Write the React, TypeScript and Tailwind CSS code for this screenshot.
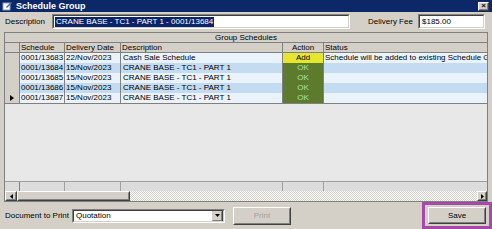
import React from "react"

const ROWS = [
  { id: "0001/13683", date: "22/Nov/2023", desc: "Cash Sale Schedule", action: "Add", status: "Schedule will be added to existing Schedule Group", current: false },
  { id: "0001/13684", date: "15/Nov/2023", desc: "CRANE BASE - TC1 - PART 1", action: "OK", status: "", current: false },
  { id: "0001/13685", date: "15/Nov/2023", desc: "CRANE BASE - TC1 - PART 1", action: "OK", status: "", current: false },
  { id: "0001/13686", date: "15/Nov/2023", desc: "CRANE BASE - TC1 - PART 1", action: "OK", status: "", current: false },
  { id: "0001/13687", date: "15/Nov/2023", desc: "CRANE BASE - TC1 - PART 1", action: "OK", status: "", current: true },
]

const COLS = "grid grid-cols-[15px_45px_56px_162px_41px_1fr]"

function Sunken({ className, children }: { className?: string; children?: React.ReactNode }) {
  return (
    <div className={`border border-t-[#808080] border-l-[#808080] border-b-white border-r-white ${className ?? ""}`}>
      <div className="h-full w-full border border-t-[#404040] border-l-[#404040] border-b-[#d4d0c8] border-r-[#d4d0c8] bg-white flex items-center overflow-hidden">
        {children}
      </div>
    </div>
  )
}

function Raised({ className, children }: { className?: string; children?: React.ReactNode }) {
  return (
    <div className={`border border-t-white border-l-white border-b-[#404040] border-r-[#404040] bg-[#d4d0c8] ${className ?? ""}`}>
      <div className="h-full w-full border border-t-[#d4d0c8] border-l-[#d4d0c8] border-b-[#808080] border-r-[#808080] flex items-center justify-center">
        {children}
      </div>
    </div>
  )
}

export default function App() {
  return (
    <div className="w-[492px] h-[229px] overflow-hidden bg-[#d4d0c8] flex flex-col font-['Liberation_Sans',Arial,sans-serif] text-[8px] leading-[10px] text-black">
      {/* title bar */}
      <div className="h-[12px] bg-[#0c2868] flex items-center pl-[2px] pr-[3px]">
        <svg width="11" height="10" viewBox="0 0 11 10">
          <rect x="1" y="2" width="7" height="7" fill="#fff" stroke="#8aa0c8" strokeWidth="1" />
          <path d="M4 6 L9 1 L10 2 L5 7 Z" fill="#4a6ab0" />
        </svg>
        <span className="ml-[3px] text-white font-bold text-[9px]">Schedule Group</span>
        <div className="ml-auto">
          <Raised className="w-[11px] h-[9px]">
            <span className="text-[8px] leading-none font-bold">×</span>
          </Raised>
        </div>
      </div>

      {/* description row */}
      <div className="mt-[2px] h-[15px] flex items-center pl-[5px]">
        <span className="w-[47px]">Description</span>
        <Sunken className="w-[298px] h-[15px]">
          <span className="ml-[1px] bg-[#0a246a] text-white px-[1px]">CRANE BASE - TC1 - PART 1 - 0001/13684</span>
        </Sunken>
        <span className="ml-[18px] w-[50px]">Delivery Fee</span>
        <Sunken className="w-[67px] h-[15px]">
          <span className="ml-[2px]">$185.00</span>
        </Sunken>
      </div>

      {/* grid */}
      <div className="mt-[3px] ml-[4px] w-[484px] h-[170px] border border-[#808080] bg-[#e8e8e8] flex flex-col">
        <div className="h-[10px] bg-[#d4d0c8] border-b border-[#808080] text-center">Group Schedules</div>
        <div className={`${COLS} h-[10px] bg-[#d4d0c8] border-b border-[#808080]`}>
          <div className="border-r border-[#808080]" />
          <div className="border-r border-[#808080] pl-[1px]">Schedule</div>
          <div className="border-r border-[#808080] pl-[1px]">Delivery Date</div>
          <div className="border-r border-[#808080] pl-[1px]">Description</div>
          <div className="border-r border-[#808080] text-center">Action</div>
          <div className="pl-[1px]">Status</div>
        </div>
        {ROWS.map((r, i) => {
          const bg = i % 2 === 0 ? "bg-[#eaf3fc]" : "bg-[#c3dcf1]"
          return (
            <div key={r.id} className={`${COLS} h-[10px]`}>
              <div className="bg-[#d4d0c8] border-r border-b border-[#808080] flex items-center justify-center">
                {r.current && (
                  <svg width="4" height="6" viewBox="0 0 4 6">
                    <path d="M0 0 L4 3 L0 6 Z" fill="#000" />
                  </svg>
                )}
              </div>
              <div className={`${bg} border-r border-b border-[#808080] pl-[1px] whitespace-nowrap overflow-hidden`}>{r.id}</div>
              <div className={`${bg} border-r border-b border-[#808080] pl-[1px] whitespace-nowrap overflow-hidden`}>{r.date}</div>
              <div className={`${bg} border-r border-b border-[#808080] pl-[2px] whitespace-nowrap overflow-hidden`}>{r.desc}</div>
              {r.action === "Add" ? (
                <div className="bg-[#e6e62c] border-r border-b border-[#808080] text-center">Add</div>
              ) : (
                <div className="bg-[#5d7b2c] text-[#a8e4a0] border-r border-b border-[#808080] text-center">OK</div>
              )}
              <div className={`${bg} border-b border-[#808080] pl-[1px] whitespace-nowrap overflow-hidden`}>{r.status}</div>
            </div>
          )
        })}
        <div className="flex-1" />
        <div className={`${COLS} h-[10px] bg-[#dcdcdc] border-t border-[#a0a0a0]`}>
          <div className="border-r border-[#808080]" />
          <div className="border-r border-[#a0a0a0]" />
          <div className="border-r border-[#a0a0a0]" />
          <div className="border-r border-[#a0a0a0]" />
          <div className="border-r border-[#a0a0a0]" />
          <div />
        </div>
        {/* horizontal scrollbar */}
        <div className="h-[10px] flex bg-[repeating-conic-gradient(#ffffff_0_25%,#d4d0c8_0_50%)] bg-[length:2px_2px]">
          <Raised className="w-[12px] h-[10px]">
            <svg width="3" height="5" viewBox="0 0 3 5">
              <path d="M3 0 L0 2.5 L3 5 Z" fill="#000" />
            </svg>
          </Raised>
          <Raised className="w-[113px] h-[10px]" />
          <div className="flex-1" />
          <Raised className="w-[10px] h-[10px]">
            <svg width="3" height="5" viewBox="0 0 3 5">
              <path d="M0 0 L3 2.5 L0 5 Z" fill="#000" />
            </svg>
          </Raised>
        </div>
      </div>

      {/* bottom row */}
      <div className="flex-1 flex items-center pl-[5px]">
        <span className="w-[67px]">Document to Print</span>
        <Sunken className="w-[153px] h-[14px]">
          <span className="ml-[2px]">Quotation</span>
          <Raised className="ml-auto w-[12px] h-[12px]">
            <svg width="5" height="3" viewBox="0 0 5 3">
              <path d="M0 0 L5 0 L2.5 3 Z" fill="#000" />
            </svg>
          </Raised>
        </Sunken>
        <Raised className="ml-[8px] w-[58px] h-[18px]">
          <span className="text-[#a0a0a0]">Print</span>
        </Raised>
        <div className="ml-auto self-stretch w-[70px] border-[3px] border-[#a54aa8] flex items-center justify-center">
          <Raised className="w-[58px] h-[17px]">
            <span>Save</span>
          </Raised>
        </div>
      </div>
    </div>
  )
}
